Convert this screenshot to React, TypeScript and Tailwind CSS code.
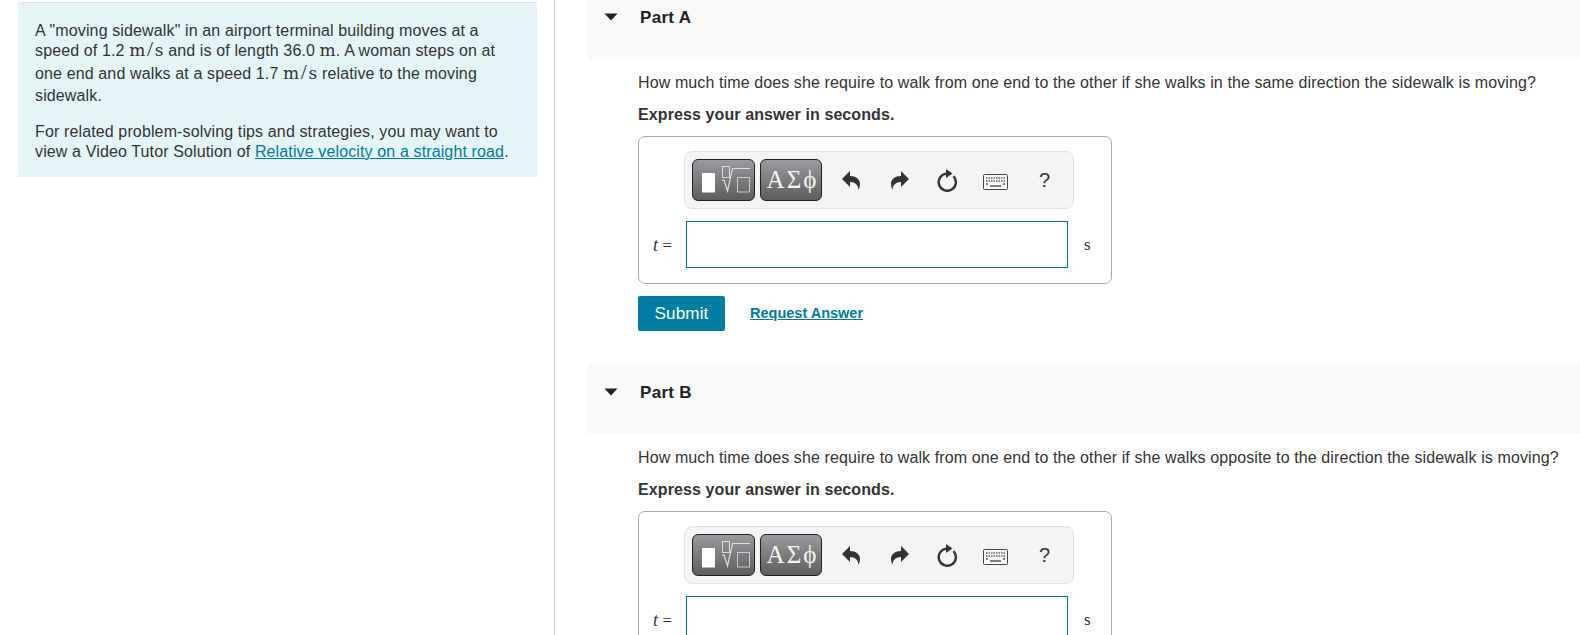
import React from "react";

const serif = "font-['Liberation_Serif',serif]";
const mathRoman = "font-['DejaVu_Serif',serif]";

function Mps() {
  return (
    <span className={`${mathRoman} text-[17px] leading-[0] text-[#333]`}>
      m<span className={`${serif} px-[1.5px] text-[22px] leading-[0] font-light`}>/</span>s
    </span>
  );
}

function Caret() {
  return (
    <svg width="14" height="8" viewBox="0 0 14 8" className="shrink-0">
      <path d="M0.5 0.5H13.5L7 7.5Z" fill="#222" />
    </svg>
  );
}

function Templates() {
  return (
    <svg width="60" height="40" viewBox="0 0 60 40" fill="none">
      <rect x="8" y="13" width="13" height="19.5" fill="#fff" />
      <rect x="28.5" y="6.5" width="7" height="11" stroke="#ddd" strokeWidth="1" />
      <path d="M28 20.5 L30 20 L33.5 31 L38.5 8.5 H56" stroke="#ddd" strokeWidth="1.2" />
      <rect x="43.5" y="17.5" width="12" height="14.5" stroke="#ccc" strokeWidth="1" />
    </svg>
  );
}

function Undo() {
  return (
    <svg width="18" height="19" viewBox="0 0 18 19">
      <path d="M0 8 L8 0 V5 C14 5 18 8.5 18 13 C18 15 17.5 17 16.5 19 C16.5 14 13 11 8 11 V16 Z" fill="#333" />
    </svg>
  );
}

function Redo() {
  return (
    <svg width="18" height="19" viewBox="0 0 18 19">
      <path d="M18 8 L10 0 V5 C4 5 0 8.5 0 13 C0 15 0.5 17 1.5 19 C1.5 14 5 11 10 11 V16 Z" fill="#333" />
    </svg>
  );
}

function Reset() {
  return (
    <svg width="21" height="23" viewBox="0 0 21 23" fill="none">
      <path d="M16.5 7.2 A8.6 8.6 0 1 1 9.5 4.6" stroke="#333" strokeWidth="2.4" />
      <path d="M9 0 L15.5 4.5 L9 9 Z" fill="#333" />
    </svg>
  );
}

function Keyboard() {
  return (
    <svg width="25" height="16" viewBox="0 0 25 16" fill="none">
      <rect x="0.5" y="0.5" width="24" height="15" rx="1" fill="#f8f8f8" stroke="#444" />
      <path d="M3 4H22 M3 7H22" stroke="#666" strokeWidth="1.6" strokeDasharray="1.5 1" />
      <path d="M3 10H5 M7 12H18 M20 10H22" stroke="#555" strokeWidth="1.6" />
    </svg>
  );
}

function AnswerBox() {
  return (
    <div className="mt-[10px] w-[474px] h-[148px] shrink-0 border border-[#a9a9a9] rounded-[7px] pt-[14px] pl-[45px] bg-white">
      <div className="w-[390px] h-[58px] border border-[#e2e2e2] bg-[#f4f4f4] rounded-[8px] flex items-center pl-[7px]">
        <div className="w-[63px] h-[42px] rounded-[6px] border border-[#222] bg-gradient-to-b from-[#9b9aa0] to-[#5e5e5e] flex items-center justify-center">
          <Templates />
        </div>
        <div className={`ml-[5px] w-[62px] h-[42px] rounded-[6px] border border-[#222] bg-gradient-to-b from-[#9b9aa0] to-[#5e5e5e] flex items-center justify-center pl-[3px] text-[#f2f2f2] text-[25px] tracking-[2px] font-light ${serif}`}>
          ΑΣϕ
        </div>
        <div className="ml-[5px] flex items-center">
          <span className="w-[48px] flex justify-center"><Undo /></span>
          <span className="w-[49px] flex justify-center"><Redo /></span>
          <span className="w-[47px] flex justify-center"><Reset /></span>
          <span className="w-[48px] flex justify-center pt-[4px]"><Keyboard /></span>
          <span className="w-[48px] flex justify-center pl-[3px] text-[20px] text-[#333]">?</span>
        </div>
      </div>
      <div className="mt-[12px] flex items-center">
        <span className={`-ml-[31px] w-[35px] pt-[1px] text-[18px] text-[#333] ${serif}`}>
          <i>t</i> <span className="text-[17px]">=</span>
        </span>
        <div className="-ml-[2px] w-[382px] h-[47px] border border-[#00708f] bg-white" />
        <span className={`ml-[16px] text-[17px] text-[#333] ${serif}`}>s</span>
      </div>
    </div>
  );
}

function Part({ name, question, children }: { name: string; question: string; children?: React.ReactNode }) {
  return (
    <section>
      <div className="flex h-[71px] bg-[#f9f9f9] pt-[19px]">
        <div className="w-[31px] flex justify-end pt-[6px]">
          <Caret />
        </div>
        <h2 className="pl-[22px] text-[17px] tracking-[0.3px] leading-[22px] font-bold text-[#222]">{name}</h2>
      </div>
      <div className="pl-[51px]">
        <p className="mt-[13px] text-[16px] leading-[22px] tracking-[0.107px] text-[#333] whitespace-nowrap">{question}</p>
        <p className="mt-[10px] text-[16px] leading-[22px] tracking-[0.1px] font-bold text-[#333] whitespace-nowrap">Express your answer in seconds.</p>
        <AnswerBox />
        {children}
      </div>
    </section>
  );
}

export default function App() {
  return (
    <div className="w-[1580px] h-[635px] overflow-hidden flex bg-white font-['Liberation_Sans',Arial,sans-serif]">
      <aside className="w-[555px] h-[635px] shrink-0 border-r border-[#c5d3dc] pl-[18px] pr-[17px] pt-[2px]">
        <div className="bg-[#e5f5f7] border-t border-[#e0e4e8] h-[175px] pl-[17px] pt-[18px] text-[16px] tracking-[0.13px] text-[#333] whitespace-nowrap">
          <p>
            <span className="block leading-[20px]">A "moving sidewalk" in an airport terminal building moves at a</span>
            <span className="block leading-[20px]">
              speed of 1.2 <Mps /> and is of length 36.0 <span className={`${mathRoman} text-[17px] leading-[0]`}>m</span>. A woman steps on at
            </span>
            <span className="block leading-[26px]">
              one end and walks at a speed 1.7 <Mps /> relative to the moving
            </span>
            <span className="block leading-[18px]">sidewalk.</span>
          </p>
          <p className="mt-[17px] leading-[20px]">
            <span className="block">For related problem-solving tips and strategies, you may want to</span>
            <span className="block">
              view a Video Tutor Solution of <a className="text-[#007c9e] underline">Relative velocity on a straight road</a>.
            </span>
          </p>
        </div>
      </aside>
      <main className="w-[1025px] pl-[32px] shrink-0">
        <div className="-mt-[12px]">
          <Part name="Part A" question="How much time does she require to walk from one end to the other if she walks in the same direction the sidewalk is moving?">
            <div className="mt-[12px] flex items-center">
              <button className="w-[87px] h-[35px] bg-[#007fa3] text-white text-[17px] tracking-[0.2px] rounded-[2px]">Submit</button>
              <a className="ml-[25px] text-[14.5px] font-bold text-[#007c9e] underline">Request Answer</a>
            </div>
          </Part>
          <div className="mt-[32px]">
            <Part name="Part B" question="How much time does she require to walk from one end to the other if she walks opposite to the direction the sidewalk is moving?" />
          </div>
        </div>
      </main>
    </div>
  );
}
